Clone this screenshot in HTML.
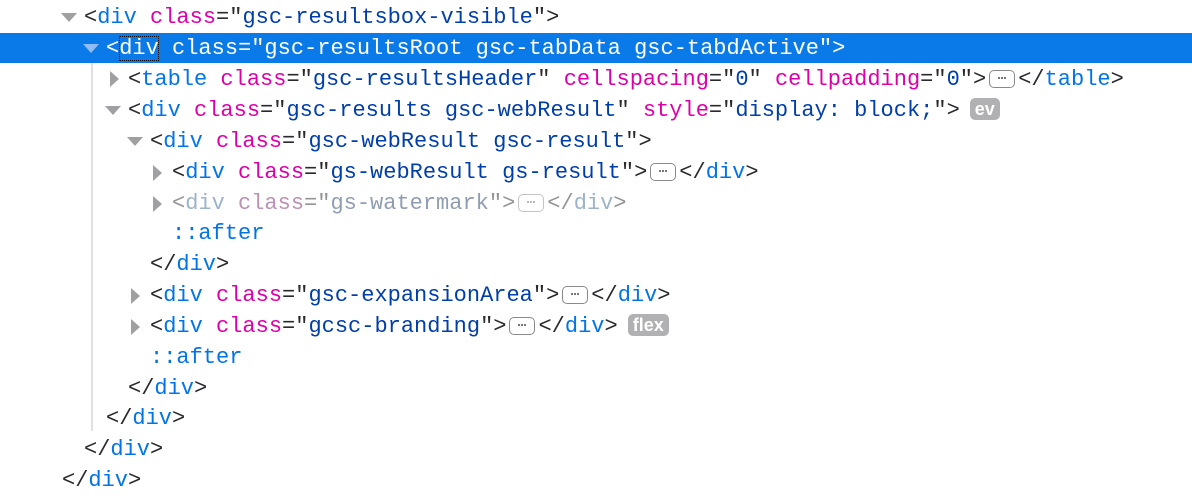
<!DOCTYPE html>
<html><head><meta charset="utf-8"><style>
body{margin:0;width:1192px;height:500px;background:#fff;position:relative;overflow:hidden;font-family:"Liberation Mono",monospace;font-size:22px;}
.l{position:absolute;height:31px;line-height:31px;white-space:pre;color:#2a2a2e;}
.t{color:#0074e8}.a{color:#dd00a9}.v{color:#003eaa}
.sel{position:absolute;left:0;top:33px;width:1192px;height:30px;background:#0a7ae8;}
.guide{position:absolute;left:91px;top:63px;width:2px;height:368px;background:#e0e0e2}
.dn{position:absolute;width:0;height:0;border-left:8px solid transparent;border-right:8px solid transparent;border-top:9px solid #a0a0a3}
.rt{position:absolute;width:0;height:0;border-top:8px solid transparent;border-bottom:8px solid transparent;border-left:9px solid #a0a0a3}
.el{display:inline-block;width:26px;height:18px;border:1.5px solid #8a8a8e;border-radius:5px;vertical-align:-3px;margin:0 3px;position:relative;box-sizing:border-box}
.el:after{content:"";position:absolute;left:8px;top:6px;width:2px;height:2px;background:#777;box-shadow:3px 0 #777,6px 0 #777}
.b{display:inline-block;background:#b1b1b3;color:#fff;font-family:"Liberation Sans",sans-serif;font-weight:bold;font-size:18px;line-height:22px;height:22px;padding:0 5px;border-radius:5px;vertical-align:1px;margin-left:10px}
.dim{opacity:.5;filter:grayscale(0.6)}
</style></head><body>
<div class="sel"></div>
<div class="guide"></div>

<div class="dn" style="left:61px;top:13px"></div>
<div class="l" style="left:84px;top:2px">&lt;<span class="t">div</span> <span class="a">class</span>="<span class="v">gsc-resultsbox-visible</span>"&gt;</div>

<div class="dn" style="left:83px;top:44px;border-top-color:#8fbcf5"></div>
<div class="l" style="left:106px;top:33px;color:#fff">&lt;<span style="outline:1.5px dotted #000;outline-offset:-1px">div</span> class="gsc-resultsRoot gsc-tabData gsc-tabdActive"&gt;</div>

<div class="rt" style="left:110px;top:71px"></div>
<div class="l" style="left:128px;top:64px">&lt;<span class="t">table</span> <span class="a">class</span>="<span class="v">gsc-resultsHeader</span>" <span class="a">cellspacing</span>="<span class="v">0</span>" <span class="a">cellpadding</span>="<span class="v">0</span>"&gt;<span class="el"></span>&lt;/<span class="t">table</span>&gt;</div>

<div class="dn" style="left:105px;top:106px"></div>
<div class="l" style="left:128px;top:95px">&lt;<span class="t">div</span> <span class="a">class</span>="<span class="v">gsc-results gsc-webResult</span>" <span class="a">style</span>="<span class="v">display: block;</span>"&gt;<span class="b">ev</span></div>

<div class="dn" style="left:127px;top:137px"></div>
<div class="l" style="left:150px;top:126px">&lt;<span class="t">div</span> <span class="a">class</span>="<span class="v">gsc-webResult gsc-result</span>"&gt;</div>

<div class="rt" style="left:153px;top:165px"></div>
<div class="l" style="left:172px;top:157px">&lt;<span class="t">div</span> <span class="a">class</span>="<span class="v">gs-webResult gs-result</span>"&gt;<span class="el"></span>&lt;/<span class="t">div</span>&gt;</div>

<div class="rt" style="left:153px;top:196px"></div>
<div class="l dim" style="left:172px;top:188px">&lt;<span class="t">div</span> <span class="a">class</span>="<span class="v">gs-watermark</span>"&gt;<span class="el"></span>&lt;/<span class="t">div</span>&gt;</div>

<div class="l t" style="left:172px;top:218px">::after</div>
<div class="l" style="left:150px;top:249px">&lt;/<span class="t">div</span>&gt;</div>

<div class="rt" style="left:131px;top:288px"></div>
<div class="l" style="left:150px;top:280px">&lt;<span class="t">div</span> <span class="a">class</span>="<span class="v">gsc-expansionArea</span>"&gt;<span class="el"></span>&lt;/<span class="t">div</span>&gt;</div>

<div class="rt" style="left:131px;top:319px"></div>
<div class="l" style="left:150px;top:311px">&lt;<span class="t">div</span> <span class="a">class</span>="<span class="v">gcsc-branding</span>"&gt;<span class="el"></span>&lt;/<span class="t">div</span>&gt;<span class="b">flex</span></div>

<div class="l t" style="left:150px;top:342px">::after</div>
<div class="l" style="left:128px;top:373px">&lt;/<span class="t">div</span>&gt;</div>
<div class="l" style="left:106px;top:403px">&lt;/<span class="t">div</span>&gt;</div>
<div class="l" style="left:84px;top:434px">&lt;/<span class="t">div</span>&gt;</div>
<div class="l" style="left:62px;top:465px">&lt;/<span class="t">div</span>&gt;</div>
</body></html>
